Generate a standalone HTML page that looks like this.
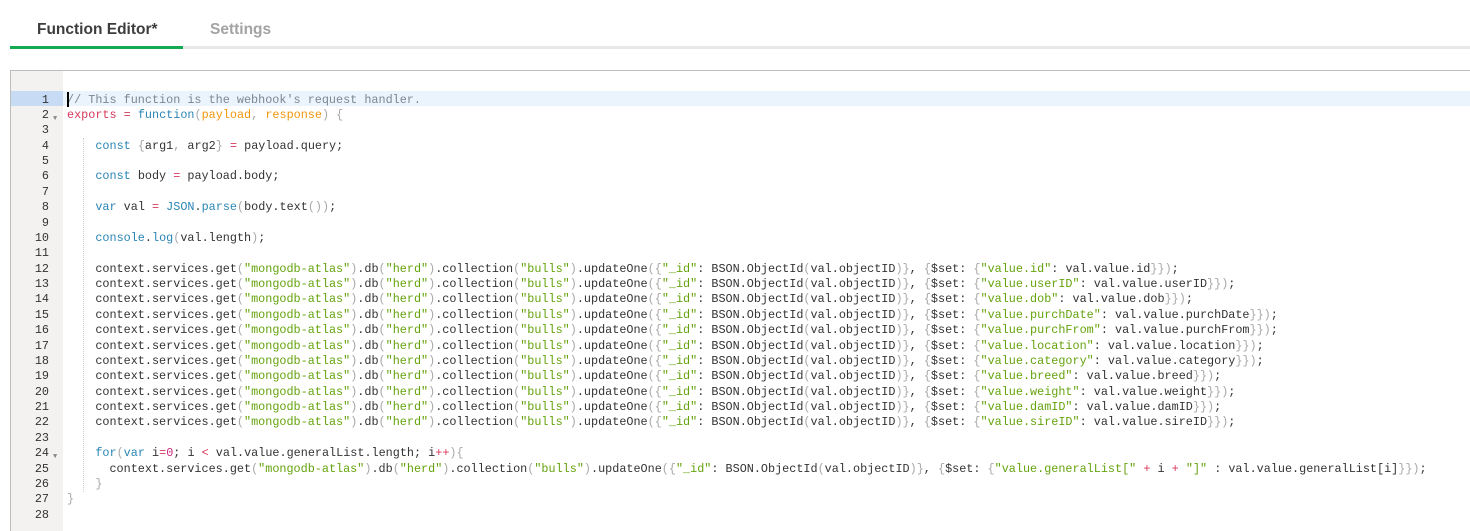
<!DOCTYPE html>
<html><head><style>
body{margin:0;width:1470px;height:518px;overflow:hidden;background:#fff;font-family:"Liberation Sans",sans-serif;position:relative}
.tab{position:absolute;top:21px;font-size:15.5px;font-weight:bold}
.t1{left:37px;color:#3d3d3d}
.t2{left:210px;color:#a3a3a3}
.bar{position:absolute;top:46px;left:10px;width:1460px;height:3px;background:#e8e8e8}
.bar i{position:absolute;left:0;top:0;width:173px;height:3px;background:#13aa52}
.ed{position:absolute;top:70px;left:10px;width:1460px;height:460px;border-top:1px solid #bdbdbd;border-left:1px solid #bdbdbd}
.gut{position:absolute;left:0;top:0;width:52px;height:460px;background:#f4f2f0}
.act{position:absolute;left:0;top:20px;width:1460px;height:15.4px;background:#ebf3fc}
.actg{position:absolute;left:0;top:20px;width:52px;height:15.4px;background:#c7dbf4}
.lines{position:absolute;left:0;top:21.5px;font-family:"Liberation Mono",monospace;font-size:11.8px;line-height:15.37px;white-space:pre;color:#333}
.num{position:absolute;left:0;top:0;width:38px;text-align:right;color:#333}
.code{position:absolute;left:56px;top:0}
.fold{position:absolute;left:42px;color:#888;font-size:7px}
.c{color:#7a8894}.r{color:#d6385a}.k{color:#2a85b5}.p{color:#f0960a}.s{color:#65a30d}.g{color:#a8a8a8}.n{color:#c9287e}
.guide{position:absolute;left:72px;border-left:1px dotted #ccc}
.cur{position:absolute;left:56px;top:21px;width:2px;height:15px;background:#000}
</style></head><body>
<div class="tab t1">Function Editor*</div>
<div class="tab t2">Settings</div>
<div class="bar"><i></i></div>
<div class="ed">
<div class="gut"></div>
<div class="act"></div><div class="actg"></div>
<div class="guide" style="top:67px;height:354px"></div>
<div class="lines"><div class="num">1
2
3
4
5
6
7
8
9
10
11
12
13
14
15
16
17
18
19
20
21
22
23
24
25
26
27
28</div><div class="fold" style="top:19px">▼</div><div class="fold" style="top:357px">▼</div><div class="code"><span class="c">// This function is the webhook's request handler.</span>
<span class="r">exports</span> <span class="r">=</span> <span class="k">function</span><span class="g">(</span><span class="p">payload</span><span class="g">,</span> <span class="p">response</span><span class="g">)</span> <span class="g">{</span>

    <span class="k">const</span> <span class="g">{</span>arg1<span class="g">,</span> arg2<span class="g">}</span> <span class="r">=</span> payload.query;

    <span class="k">const</span> body <span class="r">=</span> payload.body;

    <span class="k">var</span> val <span class="r">=</span> <span class="k">JSON</span>.<span class="k">parse</span><span class="g">(</span>body.text<span class="g">())</span>;

    <span class="k">console</span>.<span class="k">log</span><span class="g">(</span>val.length<span class="g">)</span>;

    context.services.get<span class="g">(</span><span class="s">"mongodb-atlas"</span><span class="g">)</span>.db<span class="g">(</span><span class="s">"herd"</span><span class="g">)</span>.collection<span class="g">(</span><span class="s">"bulls"</span><span class="g">)</span>.updateOne<span class="g">({</span><span class="s">"_id"</span>: BSON.ObjectId<span class="g">(</span>val.objectID<span class="g">)}</span>, <span class="g">{</span>$set: <span class="g">{</span><span class="s">"value.id"</span>: val.value.id<span class="g">}})</span>;
    context.services.get<span class="g">(</span><span class="s">"mongodb-atlas"</span><span class="g">)</span>.db<span class="g">(</span><span class="s">"herd"</span><span class="g">)</span>.collection<span class="g">(</span><span class="s">"bulls"</span><span class="g">)</span>.updateOne<span class="g">({</span><span class="s">"_id"</span>: BSON.ObjectId<span class="g">(</span>val.objectID<span class="g">)}</span>, <span class="g">{</span>$set: <span class="g">{</span><span class="s">"value.userID"</span>: val.value.userID<span class="g">}})</span>;
    context.services.get<span class="g">(</span><span class="s">"mongodb-atlas"</span><span class="g">)</span>.db<span class="g">(</span><span class="s">"herd"</span><span class="g">)</span>.collection<span class="g">(</span><span class="s">"bulls"</span><span class="g">)</span>.updateOne<span class="g">({</span><span class="s">"_id"</span>: BSON.ObjectId<span class="g">(</span>val.objectID<span class="g">)}</span>, <span class="g">{</span>$set: <span class="g">{</span><span class="s">"value.dob"</span>: val.value.dob<span class="g">}})</span>;
    context.services.get<span class="g">(</span><span class="s">"mongodb-atlas"</span><span class="g">)</span>.db<span class="g">(</span><span class="s">"herd"</span><span class="g">)</span>.collection<span class="g">(</span><span class="s">"bulls"</span><span class="g">)</span>.updateOne<span class="g">({</span><span class="s">"_id"</span>: BSON.ObjectId<span class="g">(</span>val.objectID<span class="g">)}</span>, <span class="g">{</span>$set: <span class="g">{</span><span class="s">"value.purchDate"</span>: val.value.purchDate<span class="g">}})</span>;
    context.services.get<span class="g">(</span><span class="s">"mongodb-atlas"</span><span class="g">)</span>.db<span class="g">(</span><span class="s">"herd"</span><span class="g">)</span>.collection<span class="g">(</span><span class="s">"bulls"</span><span class="g">)</span>.updateOne<span class="g">({</span><span class="s">"_id"</span>: BSON.ObjectId<span class="g">(</span>val.objectID<span class="g">)}</span>, <span class="g">{</span>$set: <span class="g">{</span><span class="s">"value.purchFrom"</span>: val.value.purchFrom<span class="g">}})</span>;
    context.services.get<span class="g">(</span><span class="s">"mongodb-atlas"</span><span class="g">)</span>.db<span class="g">(</span><span class="s">"herd"</span><span class="g">)</span>.collection<span class="g">(</span><span class="s">"bulls"</span><span class="g">)</span>.updateOne<span class="g">({</span><span class="s">"_id"</span>: BSON.ObjectId<span class="g">(</span>val.objectID<span class="g">)}</span>, <span class="g">{</span>$set: <span class="g">{</span><span class="s">"value.location"</span>: val.value.location<span class="g">}})</span>;
    context.services.get<span class="g">(</span><span class="s">"mongodb-atlas"</span><span class="g">)</span>.db<span class="g">(</span><span class="s">"herd"</span><span class="g">)</span>.collection<span class="g">(</span><span class="s">"bulls"</span><span class="g">)</span>.updateOne<span class="g">({</span><span class="s">"_id"</span>: BSON.ObjectId<span class="g">(</span>val.objectID<span class="g">)}</span>, <span class="g">{</span>$set: <span class="g">{</span><span class="s">"value.category"</span>: val.value.category<span class="g">}})</span>;
    context.services.get<span class="g">(</span><span class="s">"mongodb-atlas"</span><span class="g">)</span>.db<span class="g">(</span><span class="s">"herd"</span><span class="g">)</span>.collection<span class="g">(</span><span class="s">"bulls"</span><span class="g">)</span>.updateOne<span class="g">({</span><span class="s">"_id"</span>: BSON.ObjectId<span class="g">(</span>val.objectID<span class="g">)}</span>, <span class="g">{</span>$set: <span class="g">{</span><span class="s">"value.breed"</span>: val.value.breed<span class="g">}})</span>;
    context.services.get<span class="g">(</span><span class="s">"mongodb-atlas"</span><span class="g">)</span>.db<span class="g">(</span><span class="s">"herd"</span><span class="g">)</span>.collection<span class="g">(</span><span class="s">"bulls"</span><span class="g">)</span>.updateOne<span class="g">({</span><span class="s">"_id"</span>: BSON.ObjectId<span class="g">(</span>val.objectID<span class="g">)}</span>, <span class="g">{</span>$set: <span class="g">{</span><span class="s">"value.weight"</span>: val.value.weight<span class="g">}})</span>;
    context.services.get<span class="g">(</span><span class="s">"mongodb-atlas"</span><span class="g">)</span>.db<span class="g">(</span><span class="s">"herd"</span><span class="g">)</span>.collection<span class="g">(</span><span class="s">"bulls"</span><span class="g">)</span>.updateOne<span class="g">({</span><span class="s">"_id"</span>: BSON.ObjectId<span class="g">(</span>val.objectID<span class="g">)}</span>, <span class="g">{</span>$set: <span class="g">{</span><span class="s">"value.damID"</span>: val.value.damID<span class="g">}})</span>;
    context.services.get<span class="g">(</span><span class="s">"mongodb-atlas"</span><span class="g">)</span>.db<span class="g">(</span><span class="s">"herd"</span><span class="g">)</span>.collection<span class="g">(</span><span class="s">"bulls"</span><span class="g">)</span>.updateOne<span class="g">({</span><span class="s">"_id"</span>: BSON.ObjectId<span class="g">(</span>val.objectID<span class="g">)}</span>, <span class="g">{</span>$set: <span class="g">{</span><span class="s">"value.sireID"</span>: val.value.sireID<span class="g">}})</span>;

    <span class="k">for</span><span class="g">(</span><span class="k">var</span> i<span class="r">=</span><span class="n">0</span>; i <span class="r">&lt;</span> val.value.generalList.length; i<span class="r">++</span><span class="g">){</span>
      context.services.get<span class="g">(</span><span class="s">"mongodb-atlas"</span><span class="g">)</span>.db<span class="g">(</span><span class="s">"herd"</span><span class="g">)</span>.collection<span class="g">(</span><span class="s">"bulls"</span><span class="g">)</span>.updateOne<span class="g">({</span><span class="s">"_id"</span>: BSON.ObjectId<span class="g">(</span>val.objectID<span class="g">)}</span>, <span class="g">{</span>$set: <span class="g">{</span><span class="s">"value.generalList["</span> <span class="r">+</span> i <span class="r">+</span> <span class="s">"]"</span> : val.value.generalList[i]<span class="g">}})</span>;
    <span class="g">}</span>
<span class="g">}</span></div></div>
<div class="cur"></div>
</div>
</body></html>
